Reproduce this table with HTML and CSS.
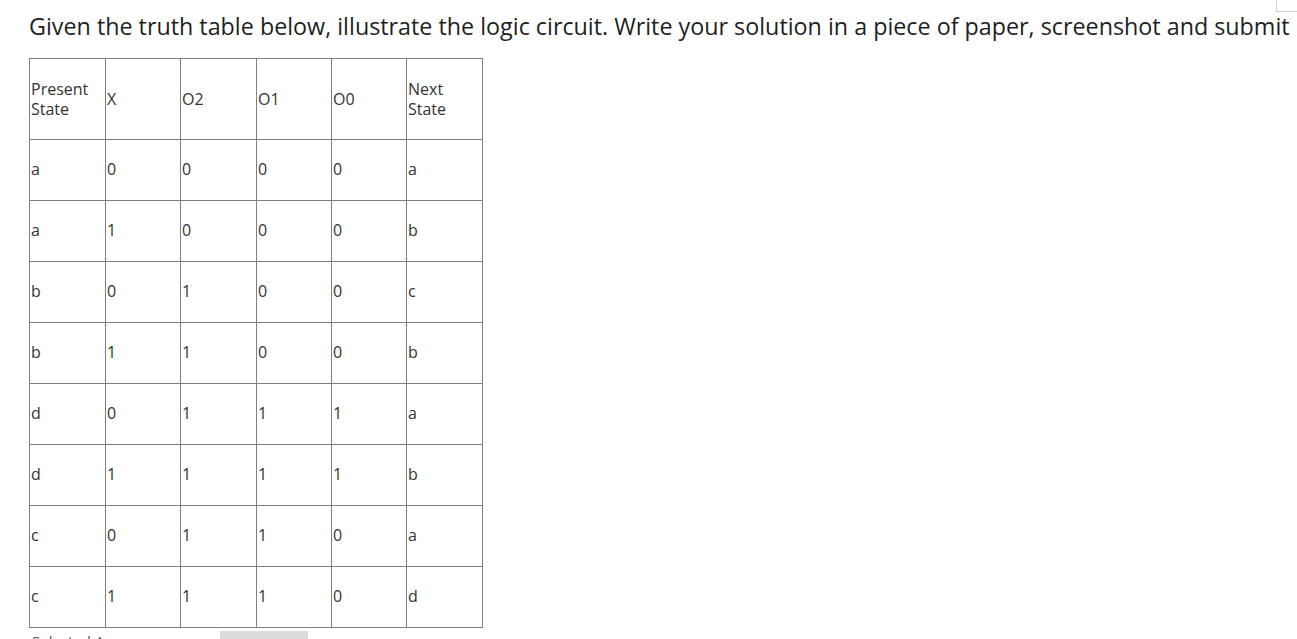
FILE: index.html
```html
<!DOCTYPE html>
<html>
<head>
<meta charset="utf-8">
<link rel="stylesheet" href="styles.css">
</head>
<body>
<div class="corner"></div>
<div class="page">
  <p class="question">Given the truth table below, illustrate the logic circuit. Write your solution in a piece of paper, screenshot and submit</p>
  <table class="truth">
    <colgroup>
      <col class="c1"><col class="c2"><col class="c3"><col class="c4"><col class="c5"><col class="c6">
    </colgroup>
    <tr class="head"><td>Present<br>State</td><td>X</td><td>O2</td><td>O1</td><td>O0</td><td>Next<br>State</td></tr>
    <tr><td>a</td><td>0</td><td>0</td><td>0</td><td>0</td><td>a</td></tr>
    <tr><td>a</td><td>1</td><td>0</td><td>0</td><td>0</td><td>b</td></tr>
    <tr><td>b</td><td>0</td><td>1</td><td>0</td><td>0</td><td>c</td></tr>
    <tr><td>b</td><td>1</td><td>1</td><td>0</td><td>0</td><td>b</td></tr>
    <tr><td>d</td><td>0</td><td>1</td><td>1</td><td>1</td><td>a</td></tr>
    <tr><td>d</td><td>1</td><td>1</td><td>1</td><td>1</td><td>b</td></tr>
    <tr><td>c</td><td>0</td><td>1</td><td>1</td><td>0</td><td>a</td></tr>
    <tr><td>c</td><td>1</td><td>1</td><td>1</td><td>0</td><td>d</td></tr>
  </table>
  <div class="answer">
    <span class="label">Selected Answer:</span>
    <span class="box"></span>
  </div>
</div>
</body>
</html>
```
FILE: styles.css
```css
html, body {
  margin: 0;
  padding: 0;
  background: #fff;
  overflow: hidden;
}
body {
  font-family: "Open Sans", "Liberation Sans", sans-serif;
  color: #222;
}
.corner {
  position: absolute;
  top: -1px;
  right: -1px;
  width: 20px;
  height: 11px;
  border: 1px solid #d0d0d0;
}
.page {
  padding: 11px 0 0 29px;
}
.question {
  margin: 0;
  font-size: 23.3px;
  line-height: 31px;
  color: #1f1f1f;
  white-space: nowrap;
}
.truth {
  margin-top: 16px;
  border-collapse: collapse;
  table-layout: fixed;
  width: 453px;
  border: 1px solid #3a3a3a;
  font-size: 16px;
  color: #333;
}
.c1 { width: 76px; }
.c2 { width: 75px; }
.c3 { width: 76px; }
.c4 { width: 75px; }
.c5 { width: 75px; }
.c6 { width: 76px; }
.truth td {
  border: 1px solid #808080;
  padding: 0 1px 2px;
  height: 58px;
  vertical-align: middle;
  line-height: 20px;
}
.truth tr.head td {
  height: 78px;
  padding: 1px 1px 1px;
}
.answer {
  display: flex;
  align-items: flex-start;
  margin-top: 2px;
  height: 20px;
}
.label {
  font-size: 15px;
  color: #555;
  padding-left: 3px;
  width: 188px;
  line-height: 20px;
  margin-top: 1px;
}
.box {
  width: 88px;
  height: 14px;
  margin-top: 1px;
  background: #dcdcdc;
}
```
